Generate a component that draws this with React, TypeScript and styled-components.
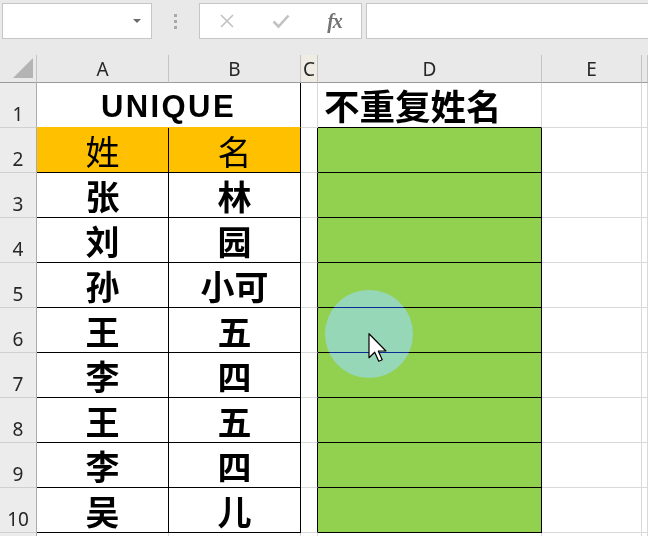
import React from "react";
import styled, { createGlobalStyle } from "styled-components";

const GRID = "#d9d9d9";
const HEAD_LINE = "#c4c4c4";
const BLACK = "#000";
const ORANGE = "#ffc000";
const GREEN = "#92d050";

const GlobalStyle = createGlobalStyle`
  html, body {
    margin: 0;
    padding: 0;
    background: #fff;
    overflow: hidden;
  }
  body {
    font-family: "Noto Sans", "Liberation Sans", sans-serif;
  }
`;

const Window = styled.div`
  position: relative;
  width: 648px;
  height: 536px;
  overflow: hidden;
  background: #fff;
`;

const Toolbar = styled.div`
  display: flex;
  align-items: flex-start;
  height: 55px;
  padding-top: 3px;
  box-sizing: border-box;
  background: #e9e9e9;
`;

const NameBox = styled.div`
  display: flex;
  align-items: center;
  justify-content: flex-end;
  width: 150px;
  height: 36px;
  margin-left: 2px;
  padding-right: 10px;
  box-sizing: border-box;
  background: #fff;
  border: 1px solid #c6c6c6;
`;

const Caret = styled.span`
  width: 0;
  height: 0;
  border-left: 4px solid transparent;
  border-right: 4px solid transparent;
  border-top: 4px solid #6b6b6b;
`;

const Grip = styled.div`
  display: flex;
  flex-direction: column;
  align-items: center;
  justify-content: center;
  gap: 3px;
  width: 47px;
  height: 36px;
`;

const GripDot = styled.span`
  width: 3px;
  height: 3px;
  background: #a9a9a9;
`;

const FxBox = styled.div`
  display: grid;
  grid-template-columns: 54px 54px 1fr;
  align-items: center;
  width: 163px;
  height: 36px;
  box-sizing: border-box;
  background: #fff;
  border: 1px solid #c6c6c6;
`;

const FxSlot = styled.div`
  display: flex;
  align-items: center;
  justify-content: center;
`;

const FxLabel = styled.span`
  font-family: "Liberation Serif", "DejaVu Serif", serif;
  font-style: italic;
  font-weight: bold;
  font-size: 20px;
  color: #737373;
  letter-spacing: -1px;
`;

const FormulaInput = styled.div`
  flex: 1;
  height: 36px;
  margin-left: 4px;
  box-sizing: border-box;
  background: #fff;
  border: 1px solid #c6c6c6;
  border-right: none;
`;

const Sheet = styled.div`
  display: grid;
  grid-template-columns: 37px 132px 132px 17px 224px 100px 1fr;
  grid-template-rows: 28px repeat(11, 45px);
`;

const Corner = styled.div`
  display: flex;
  align-items: flex-end;
  justify-content: flex-end;
  padding: 0 3px 4px 0;
  box-sizing: border-box;
  background: #e9e9e9;
  border-right: 1px solid ${HEAD_LINE};
  border-bottom: 1px solid #9b9b9b;
`;

const ColHead = styled.div<{ $active?: boolean }>`
  display: flex;
  align-items: center;
  justify-content: center;
  box-sizing: border-box;
  background: ${(p) => (p.$active ? "#efece4" : "#e9e9e9")};
  border-right: 1px solid ${HEAD_LINE};
  border-bottom: 1px solid #9b9b9b;
  font-size: 19px;
  color: #262626;
  overflow: hidden;
`;

const RowHead = styled.div`
  display: flex;
  align-items: flex-end;
  justify-content: center;
  padding-bottom: 1px;
  box-sizing: border-box;
  background: #ececec;
  border-right: 1px solid #ababab;
  border-bottom: 1px solid #d0d0d0;
  font-size: 19px;
  line-height: 1.2;
  color: #262626;
`;

const Cell = styled.div<{
  $fill?: string;
  $right?: string;
  $bottom?: string;
  $span?: number;
  $align?: "left" | "center";
}>`
  display: flex;
  align-items: flex-end;
  justify-content: ${(p) => (p.$align === "left" ? "flex-start" : "center")};
  padding-left: ${(p) => (p.$align === "left" ? "6px" : "0")};
  grid-column: span ${(p) => p.$span ?? 1};
  box-sizing: border-box;
  background: ${(p) => p.$fill ?? "#fff"};
  border-right: 1px solid ${(p) => p.$right ?? GRID};
  border-bottom: 1px solid ${(p) => p.$bottom ?? GRID};
  white-space: nowrap;
`;

const Han = styled.span<{ $bold?: boolean; $size?: number }>`
  font-family: "Noto Sans CJK SC", "Noto Sans", sans-serif;
  font-weight: ${(p) => (p.$bold ? 700 : 400)};
  font-size: ${(p) => p.$size ?? 34}px;
  line-height: 1.1;
  padding-bottom: 3px;
  color: #000;
`;

const Title = styled.span`
  font-family: "Liberation Sans", Arial, sans-serif;
  font-weight: 700;
  font-size: 31px;
  letter-spacing: 2.4px;
  line-height: 1.2;
  padding-bottom: 2px;
  color: #000;
`;

const Spot = styled.div`
  position: absolute;
  left: 325px;
  top: 290px;
  width: 88px;
  height: 88px;
  border-radius: 50%;
  background: rgb(10, 40, 150);
  mix-blend-mode: screen;
  filter: blur(0.6px);
`;

const Pointer = styled.svg`
  position: absolute;
  left: 368px;
  top: 333px;
`;

const names: [string, string][] = [
  ["张", "林"],
  ["刘", "园"],
  ["孙", "小可"],
  ["王", "五"],
  ["李", "四"],
  ["王", "五"],
  ["李", "四"],
  ["吴", "儿"],
];

const columns = ["A", "B", "C", "D", "E", ""];

export default function App() {
  return (
    <Window>
      <GlobalStyle />
      <Toolbar>
        <NameBox>
          <Caret />
        </NameBox>
        <Grip>
          <GripDot />
          <GripDot />
          <GripDot />
        </Grip>
        <FxBox>
          <FxSlot>
            <svg width="16" height="16" viewBox="0 0 16 16">
              <path d="M2 2 L14 14 M14 2 L2 14" stroke="#c2c2c2" strokeWidth="1.6" fill="none" />
            </svg>
          </FxSlot>
          <FxSlot>
            <svg width="18" height="16" viewBox="0 0 18 16">
              <path d="M1.5 8.5 L6.5 13.5 L16.5 2.5" stroke="#c2c2c2" strokeWidth="2.6" fill="none" />
            </svg>
          </FxSlot>
          <FxSlot>
            <FxLabel>fx</FxLabel>
          </FxSlot>
        </FxBox>
        <FormulaInput />
      </Toolbar>

      <Sheet>
        <Corner>
          <svg width="20" height="20" viewBox="0 0 20 20">
            <path d="M20 0 L20 20 L0 20 Z" fill="#b4b4b4" />
          </svg>
        </Corner>
        {columns.map((c, i) => (
          <ColHead key={i} $active={c === "C"}>
            {c}
          </ColHead>
        ))}

        <RowHead>1</RowHead>
        <Cell $span={2} $right={BLACK} $bottom={ORANGE}>
          <Title>UNIQUE</Title>
        </Cell>
        <Cell />
        <Cell $align="left" $bottom={BLACK}>
          <Han $bold $size={35.5}>
            不重复姓名
          </Han>
        </Cell>
        <Cell />
        <Cell />

        <RowHead>2</RowHead>
        <Cell $fill={ORANGE} $right={BLACK} $bottom={BLACK}>
          <Han>姓</Han>
        </Cell>
        <Cell $fill={ORANGE} $right={BLACK} $bottom={BLACK}>
          <Han>名</Han>
        </Cell>
        <Cell $right={BLACK} />
        <Cell $fill={GREEN} $right={BLACK} $bottom={BLACK} />
        <Cell />
        <Cell />

        {names.map(([last, first], i) => (
          <React.Fragment key={i}>
            <RowHead>{i + 3}</RowHead>
            <Cell $right={BLACK} $bottom={BLACK}>
              <Han $bold>{last}</Han>
            </Cell>
            <Cell $right={BLACK} $bottom={BLACK}>
              <Han $bold>{first}</Han>
            </Cell>
            <Cell $right={BLACK} />
            <Cell $fill={GREEN} $right={BLACK} $bottom={BLACK} />
            <Cell />
            <Cell />
          </React.Fragment>
        ))}

        <RowHead />
        <Cell />
        <Cell />
        <Cell />
        <Cell />
        <Cell />
        <Cell />
      </Sheet>

      <Spot />
      <Pointer width="20" height="30" viewBox="0 0 13 20">
        <path
          d="M0.5 0.5 L0.5 16.5 L4.3 12.8 L7 18.8 L9.3 17.8 L6.7 12 L11.8 12 Z"
          fill="#fff"
          stroke="#000"
          strokeWidth="0.8"
          strokeLinejoin="round"
        />
      </Pointer>
    </Window>
  );
}
